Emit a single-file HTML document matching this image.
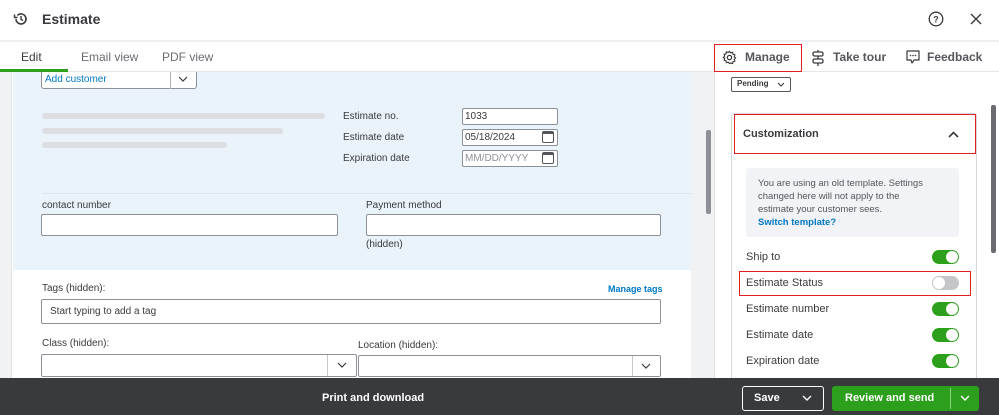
<!DOCTYPE html>
<html><head><style>
*{box-sizing:border-box;margin:0;padding:0}
body{width:999px;height:415px;overflow:hidden;background:#fff;font-family:"Liberation Sans",sans-serif;position:relative;color:#393a3d}
.a{position:absolute}
.t{font-size:10px;color:#393a3d;white-space:nowrap}
.inp{position:absolute;background:#fff;border:1px solid #8d9096;border-radius:2px}
.bar{position:absolute;background:#dcdee2;height:6px;border-radius:3px}
.tog{position:absolute;left:932px;width:27px;height:14px;border-radius:7px;background:#2ca01c}
.tog:after{content:"";position:absolute;right:1px;top:1px;width:12px;height:12px;border-radius:50%;background:#fff}
.tog.off{background:#c4c6ca}
.tog.off:after{right:auto;left:1px}
.lbl{position:absolute;left:746px;font-size:11px;color:#393a3d}
</style></head><body>
<svg class="a" style="left:13px;top:11px" width="16" height="16" viewBox="0 0 16 16"><path d="M3 8a5 5 0 1 0 1.5-3.6" fill="none" stroke="#393a3d" stroke-width="1.6"/><path d="M1.5 3.5v3h3" fill="none" stroke="#393a3d" stroke-width="1.5"/><path d="M8 5v3.3l2 1.2" fill="none" stroke="#393a3d" stroke-width="1.4"/></svg>
<div class="a" style="left:42px;top:11px;font-size:14px;font-weight:bold;color:#393a3d">Estimate</div>
<svg class="a" style="left:928px;top:11px" width="16" height="16" viewBox="0 0 16 16"><circle cx="8" cy="8" r="6.8" fill="none" stroke="#393a3d" stroke-width="1.3"/><text x="8" y="11.5" font-size="9" text-anchor="middle" font-family="Liberation Sans" fill="#393a3d" font-weight="bold">?</text></svg>
<svg class="a" style="left:970px;top:13px" width="12" height="12" viewBox="0 0 12 12"><path d="M1 1l10 10M11 1L1 11" stroke="#393a3d" stroke-width="1.4"/></svg>
<div class="a" style="left:0;top:40px;width:999px;height:2px;background:#eceef1"></div>
<div class="a t" style="left:21px;top:50px;font-size:12px">Edit</div>
<div class="a t" style="left:81px;top:50px;font-size:12px;color:#6b6c72">Email view</div>
<div class="a t" style="left:162px;top:50px;font-size:12px;color:#6b6c72">PDF view</div>
<div class="a" style="left:0;top:69px;width:68px;height:3px;background:#2ca01c"></div>
<div class="a" style="left:68px;top:71px;width:931px;height:1px;background:#e4e6ea"></div>
<div class="a" style="left:714px;top:44px;width:88px;height:28px;border:1.5px solid #e02020"></div>
<svg class="a" style="left:722px;top:50px" width="15" height="15" viewBox="0 0 16 16"><circle cx="8" cy="8" r="2.3" fill="none" stroke="#393a3d" stroke-width="1.3"/><path d="M8 1.5l1.3 1.6 2-.6.4 2 2 .6-.6 2 1.4 1.4-1.4 1.4.6 2-2 .6-.4 2-2-.6L8 14.5l-1.3-1.6-2 .6-.4-2-2-.6.6-2L1.5 8l1.4-1.4-.6-2 2-.6.4-2 2 .6z" fill="none" stroke="#393a3d" stroke-width="1.2"/></svg>
<div class="a t" style="left:745px;top:50px;font-size:12px;font-weight:bold;color:#55565b">Manage</div>
<svg class="a" style="left:811px;top:50px" width="14" height="16" viewBox="0 0 14 16"><rect x="2" y="2" width="10" height="4" rx="1.5" fill="none" stroke="#393a3d" stroke-width="1.3"/><rect x="2" y="9" width="10" height="4" rx="1.5" fill="none" stroke="#393a3d" stroke-width="1.3"/><path d="M7 0v2M7 6v3M7 13v3" stroke="#393a3d" stroke-width="1.3"/></svg>
<div class="a t" style="left:833px;top:50px;font-size:12px;font-weight:bold;color:#55565b">Take tour</div>
<svg class="a" style="left:905px;top:49px" width="16" height="16" viewBox="0 0 16 16"><path d="M2 2h12v9H9l-2 3-1-3H2z" fill="none" stroke="#393a3d" stroke-width="1.2" stroke-linejoin="round"/><circle cx="5.5" cy="6.5" r=".8" fill="#393a3d"/><circle cx="8" cy="6.5" r=".8" fill="#393a3d"/><circle cx="10.5" cy="6.5" r=".8" fill="#393a3d"/></svg>
<div class="a t" style="left:927px;top:50px;font-size:12px;font-weight:bold;color:#55565b">Feedback</div>
<div class="a" style="left:0;top:72px;width:12px;height:306px;background:#f1f2f4;border-right:1px solid #dfe1e5"></div>
<div class="a" style="left:13px;top:72px;width:678px;height:198px;background:#eaf2fa"></div>
<div class="a" style="left:691px;top:72px;width:24px;height:306px;background:#f1f2f4"></div>
<div class="a" style="left:706px;top:130px;width:5px;height:84px;background:#8d9096;border-radius:2px"></div>
<div class="a" style="left:714px;top:72px;width:1px;height:306px;background:#e0e2e6"></div>
<div class="inp" style="left:41px;top:72px;width:156px;height:17px;border-top:none;border-radius:0 0 3px 3px"></div>
<div class="a" style="left:170px;top:72px;width:1px;height:17px;background:#b0b3b8"></div>
<div class="a t" style="left:45px;top:74px;color:#0077c5">Add customer</div>
<svg class="a" style="left:178px;top:76px" width="10" height="6" viewBox="0 0 10 6"><path d="M1 1l4 4 4-4" fill="none" stroke="#393a3d" stroke-width="1.2"/></svg>
<div class="bar" style="left:42px;top:113px;width:283px"></div>
<div class="bar" style="left:42px;top:128px;width:241px"></div>
<div class="bar" style="left:42px;top:142px;width:185px"></div>
<div class="a t" style="left:343px;top:111px">Estimate no.</div>
<div class="a t" style="left:343px;top:132px">Estimate date</div>
<div class="a t" style="left:343px;top:153px">Expiration date</div>
<div class="inp" style="left:462px;top:108px;width:96px;height:17px"></div>
<div class="a t" style="left:465px;top:111px">1033</div>
<div class="inp" style="left:462px;top:129px;width:96px;height:17px"></div>
<div class="a t" style="left:465px;top:132px">05/18/2024</div>
<div class="inp" style="left:462px;top:150px;width:96px;height:17px"></div>
<div class="a t" style="left:465px;top:153px;color:#8d9096">MM/DD/YYYY</div>
<div class="a" style="left:542px;top:131px;width:12px;height:12px;border:1.3px solid #55565b;border-radius:2px;border-top-width:3px"></div>
<div class="a" style="left:542px;top:152px;width:12px;height:12px;border:1.3px solid #55565b;border-radius:2px;border-top-width:3px"></div>
<div class="a" style="left:42px;top:193px;width:650px;height:1px;background:#dde5ee"></div>
<div class="a t" style="left:42px;top:200px">contact number</div>
<div class="a t" style="left:366px;top:200px">Payment method</div>
<div class="inp" style="left:41px;top:214px;width:297px;height:22px"></div>
<div class="inp" style="left:366px;top:214px;width:295px;height:22px"></div>
<div class="a t" style="left:366px;top:239px">(hidden)</div>
<div class="a t" style="left:42px;top:283px">Tags (hidden):</div>
<div class="a t" style="left:608px;top:284px;font-size:9px;color:#0077c5;font-weight:bold">Manage tags</div>
<div class="inp" style="left:41px;top:299px;width:620px;height:25px"></div>
<div class="a t" style="left:50px;top:306px">Start typing to add a tag</div>
<div class="a t" style="left:42px;top:338px">Class (hidden):</div>
<div class="a t" style="left:358px;top:340px">Location (hidden):</div>
<div class="inp" style="left:41px;top:354px;width:316px;height:23px"></div>
<div class="a" style="left:327px;top:355px;width:1px;height:21px;background:#c4c6ca"></div>
<svg class="a" style="left:337px;top:362px" width="10" height="6" viewBox="0 0 10 6"><path d="M1 1l4 4 4-4" fill="none" stroke="#393a3d" stroke-width="1.2"/></svg>
<div class="inp" style="left:358px;top:355px;width:303px;height:22px"></div>
<div class="a" style="left:632px;top:356px;width:1px;height:20px;background:#c4c6ca"></div>
<svg class="a" style="left:641px;top:363px" width="10" height="6" viewBox="0 0 10 6"><path d="M1 1l4 4 4-4" fill="none" stroke="#393a3d" stroke-width="1.2"/></svg>
<div class="a" style="left:731px;top:77px;width:60px;height:15px;border:1.3px solid #55565b;border-radius:2px"></div>
<div class="a t" style="left:737px;top:79px;font-size:8px;font-weight:bold">Pending</div>
<svg class="a" style="left:777px;top:82px" width="8" height="5" viewBox="0 0 8 5"><path d="M1 1l3 3 3-3" fill="none" stroke="#393a3d" stroke-width="1.1"/></svg>
<div class="a" style="left:731px;top:113px;width:246px;height:270px;border:1px solid #d4d7dc;border-radius:3px"></div>
<div class="a" style="left:734px;top:114px;width:242px;height:40px;border:1.5px solid #e02020"></div>
<div class="a t" style="left:743px;top:128px;font-size:11px;font-weight:bold">Customization</div>
<svg class="a" style="left:948px;top:131px" width="11" height="7" viewBox="0 0 11 7"><path d="M1 6l4.5-4.5L10 6" fill="none" stroke="#393a3d" stroke-width="1.6"/></svg>
<div class="a" style="left:746px;top:168px;width:213px;height:69px;background:#f1f3f6;border-radius:3px"></div>
<div class="a" style="left:758px;top:177px;font-size:9.5px;line-height:13px;color:#55565b;width:200px">You are using an old template. Settings<br>changed here will not apply to the<br>estimate your customer sees.<br><span style="color:#0077c5;font-weight:bold">Switch template?</span></div>
<div class="lbl" style="top:251px">Ship to</div><div class="tog" style="top:250px"></div>
<div class="a" style="left:739px;top:271px;width:232px;height:25px;border:1.5px solid #e02020"></div>
<div class="lbl" style="top:277px">Estimate Status</div><div class="tog off" style="top:276px"></div>
<div class="lbl" style="top:303px">Estimate number</div><div class="tog" style="top:302px"></div>
<div class="lbl" style="top:329px">Estimate date</div><div class="tog" style="top:328px"></div>
<div class="lbl" style="top:355px">Expiration date</div><div class="tog" style="top:354px"></div>
<div class="a" style="left:991px;top:105px;width:5px;height:148px;background:#6b6c72;border-radius:2px"></div>
<div class="a" style="left:0;top:378px;width:999px;height:37px;background:#393a3d"></div>
<div class="a" style="left:322px;top:392px;font-size:11px;font-weight:bold;color:#fff">Print and download</div>
<div class="a" style="left:742px;top:386px;width:82px;height:25px;border:1.5px solid #fff;border-radius:3px"></div>
<div class="a" style="left:754px;top:392px;font-size:11px;font-weight:bold;color:#fff">Save</div>
<svg class="a" style="left:802px;top:395px" width="10" height="6" viewBox="0 0 10 6"><path d="M1 1l4 4 4-4" fill="none" stroke="#fff" stroke-width="1.4"/></svg>
<div class="a" style="left:832px;top:386px;width:147px;height:25px;background:#2ca01c;border-radius:3px"></div>
<div class="a" style="left:950px;top:388px;width:1px;height:21px;background:#8fd085"></div>
<div class="a" style="left:845px;top:392px;font-size:11px;font-weight:bold;color:#fff">Review and send</div>
<svg class="a" style="left:960px;top:395px" width="10" height="6" viewBox="0 0 10 6"><path d="M1 1l4 4 4-4" fill="none" stroke="#fff" stroke-width="1.4"/></svg>
</body></html>
